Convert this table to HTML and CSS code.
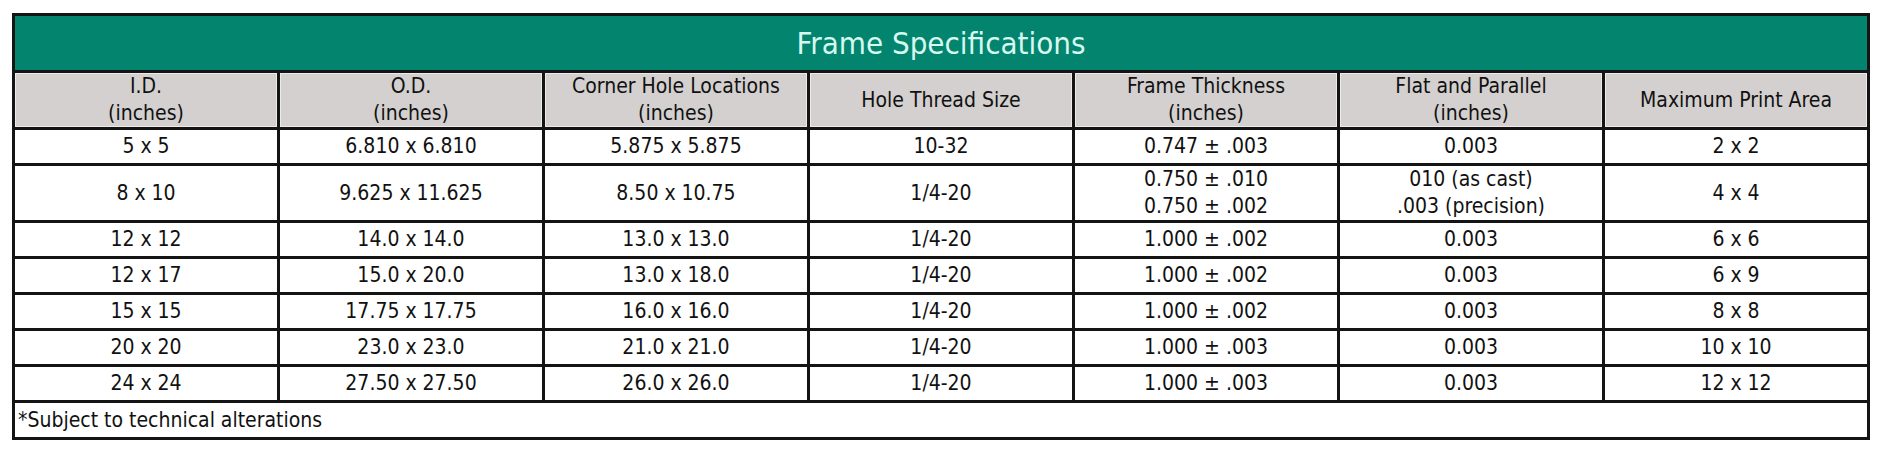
FILE: index.html
```html
<!DOCTYPE html>
<html>
<head>
<meta charset="utf-8">
<link rel="stylesheet" href="styles.css">
</head>
<body>
<div class="wrap">
<table class="spec">
  <colgroup>
    <col><col><col><col><col><col><col>
  </colgroup>
  <thead>
    <tr class="title-row"><th colspan="7" class="title">Frame Specifications</th></tr>
    <tr class="head-row">
      <th>I.D.<br>(inches)</th>
      <th>O.D.<br>(inches)</th>
      <th>Corner Hole Locations<br>(inches)</th>
      <th>Hole Thread Size</th>
      <th>Frame Thickness<br>(inches)</th>
      <th>Flat and Parallel<br>(inches)</th>
      <th>Maximum Print Area</th>
    </tr>
  </thead>
  <tbody>
    <tr><td>5 x 5</td><td>6.810 x 6.810</td><td>5.875 x 5.875</td><td>10-32</td><td>0.747 ± .003</td><td>0.003</td><td>2 x 2</td></tr>
    <tr class="tall"><td>8 x 10</td><td>9.625 x 11.625</td><td>8.50 x 10.75</td><td>1/4-20</td><td>0.750 ± .010<br>0.750 ± .002</td><td>010 (as cast)<br>.003 (precision)</td><td>4 x 4</td></tr>
    <tr><td>12 x 12</td><td>14.0 x 14.0</td><td>13.0 x 13.0</td><td>1/4-20</td><td>1.000 ± .002</td><td>0.003</td><td>6 x 6</td></tr>
    <tr><td>12 x 17</td><td>15.0 x 20.0</td><td>13.0 x 18.0</td><td>1/4-20</td><td>1.000 ± .002</td><td>0.003</td><td>6 x 9</td></tr>
    <tr><td>15 x 15</td><td>17.75 x 17.75</td><td>16.0 x 16.0</td><td>1/4-20</td><td>1.000 ± .002</td><td>0.003</td><td>8 x 8</td></tr>
    <tr><td>20 x 20</td><td>23.0 x 23.0</td><td>21.0 x 21.0</td><td>1/4-20</td><td>1.000 ± .003</td><td>0.003</td><td>10 x 10</td></tr>
    <tr><td>24 x 24</td><td>27.50 x 27.50</td><td>26.0 x 26.0</td><td>1/4-20</td><td>1.000 ± .003</td><td>0.003</td><td>12 x 12</td></tr>
    <tr class="note-row"><td colspan="7" class="note">*Subject to technical alterations</td></tr>
  </tbody>
</table>
</div>
</body>
</html>
```
FILE: styles.css
```css
html, body {
  margin: 0;
  padding: 0;
  background: #ffffff;
}
.wrap {
  padding: 13px 12px 0 12px;
}
.spec {
  width: 1858px;
  border-collapse: collapse;
  table-layout: fixed;
  border: 3px solid #141414;
  font-family: "DejaVu Sans Condensed", "DejaVu Sans", sans-serif;
  font-size: 21px;
  color: #111111;
}
.spec th, .spec td {
  border: 3px solid #141414;
  padding: 0 4px;
  text-align: center;
  vertical-align: middle;
  font-weight: normal;
  line-height: 27px;
}
.title-row { height: 57px; }
.title {
  background: #02846f;
  color: #d6f8ee;
  font-size: 31px;
  line-height: 40px;
}
.head-row { height: 56px; }
.head-row th {
  background: #d3d0cf;
  box-shadow: inset 0 0 0 1px #eceaea;
}
tbody tr { height: 36px; }
tbody tr.tall { height: 55px; }
tbody tr.note-row { height: 37px; }
.spec td.note {
  text-align: left;
  padding-left: 3px;
}
```
